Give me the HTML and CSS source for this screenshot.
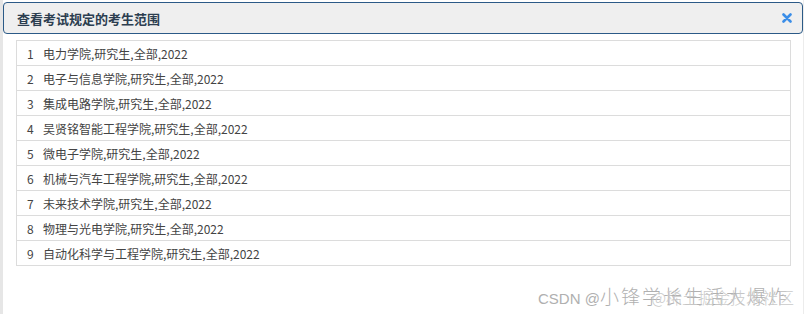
FILE: index.html
```html
<!DOCTYPE html>
<html lang="zh-CN">
<head>
    <meta charset="UTF-8">
    <title>查看考试规定的考生范围</title>
    <link rel="stylesheet" href="styles.css">
</head>
<body>
    <div class="page">
        <div class="dialog-head">
            <span class="dialog-title">查看考试规定的考生范围</span>
            <span class="dialog-close">
                <svg width="10" height="10" viewBox="0 0 10 10"><path d="M1.5 1.5 L8.5 8.5 M8.5 1.5 L1.5 8.5" stroke="#3b8ee8" stroke-width="2.6" stroke-linecap="round"/></svg>
            </span>
        </div>

        <table class="scope">
            <tr><td class="no">1</td><td>电力学院,研究生,全部,2022</td></tr>
            <tr><td class="no">2</td><td>电子与信息学院,研究生,全部,2022</td></tr>
            <tr><td class="no">3</td><td>集成电路学院,研究生,全部,2022</td></tr>
            <tr><td class="no">4</td><td>吴贤铭智能工程学院,研究生,全部,2022</td></tr>
            <tr><td class="no">5</td><td>微电子学院,研究生,全部,2022</td></tr>
            <tr><td class="no">6</td><td>机械与汽车工程学院,研究生,全部,2022</td></tr>
            <tr><td class="no">7</td><td>未来技术学院,研究生,全部,2022</td></tr>
            <tr><td class="no">8</td><td>物理与光电学院,研究生,全部,2022</td></tr>
            <tr><td class="no">9</td><td>自动化科学与工程学院,研究生,全部,2022</td></tr>
        </table>

        <div class="watermark"><span class="mark-tag">CSDN @</span>小锋学长生活大爆炸</div>
        <div class="watermark-under">@稀土掘金技术社区</div>
    </div>
</body>
</html>
```

FILE: styles.css
```css
body {
    margin: 0;
    font-family: "Noto Sans CJK SC", "Noto Sans", sans-serif;
    background: #fff;
    color: #333;
}
.page {
    position: relative;
    width: 804px;
    height: 314px;
    box-sizing: border-box;
    border-left: 3px solid #e6e6e6;
    border-right: 1px solid #ececec;
    padding-top: 2px;
}
.dialog-head {
    display: flex;
    align-items: center;
    justify-content: space-between;
    height: 32px;
    box-sizing: border-box;
    border: 1px solid #2b5a87;
    border-radius: 4px;
    background: #efefef;
    padding: 0 10px 0 13px;
}
.dialog-title {
    font-size: 13px;
    font-weight: bold;
    color: #2c3e50;
}
.dialog-close {
    display: flex;
}
.scope {
    margin: 6px 0 0 13px;
    width: 775px;
    border-collapse: collapse;
    border: 1px solid #dcdcdc;
    font-size: 12px;
    color: #444;
}
.scope td {
    height: 24px;
    padding: 0;
    border-bottom: 1px solid #dcdcdc;
}
.scope td.no {
    width: 16px;
    padding-left: 10px;
}
.watermark {
    position: absolute;
    left: 535px;
    top: 282px;
    font-size: 19px;
    font-weight: 300;
    letter-spacing: 2px;
    color: #b0b0b0;
    white-space: nowrap;
}
.mark-tag {
    font-family: "Liberation Sans", sans-serif;
    font-size: 15px;
    letter-spacing: 0;
}
.watermark-under {
    position: absolute;
    right: 9px;
    top: 285px;
    font-size: 16px;
    font-weight: 300;
    color: #cacaca;
    white-space: nowrap;
}
```
